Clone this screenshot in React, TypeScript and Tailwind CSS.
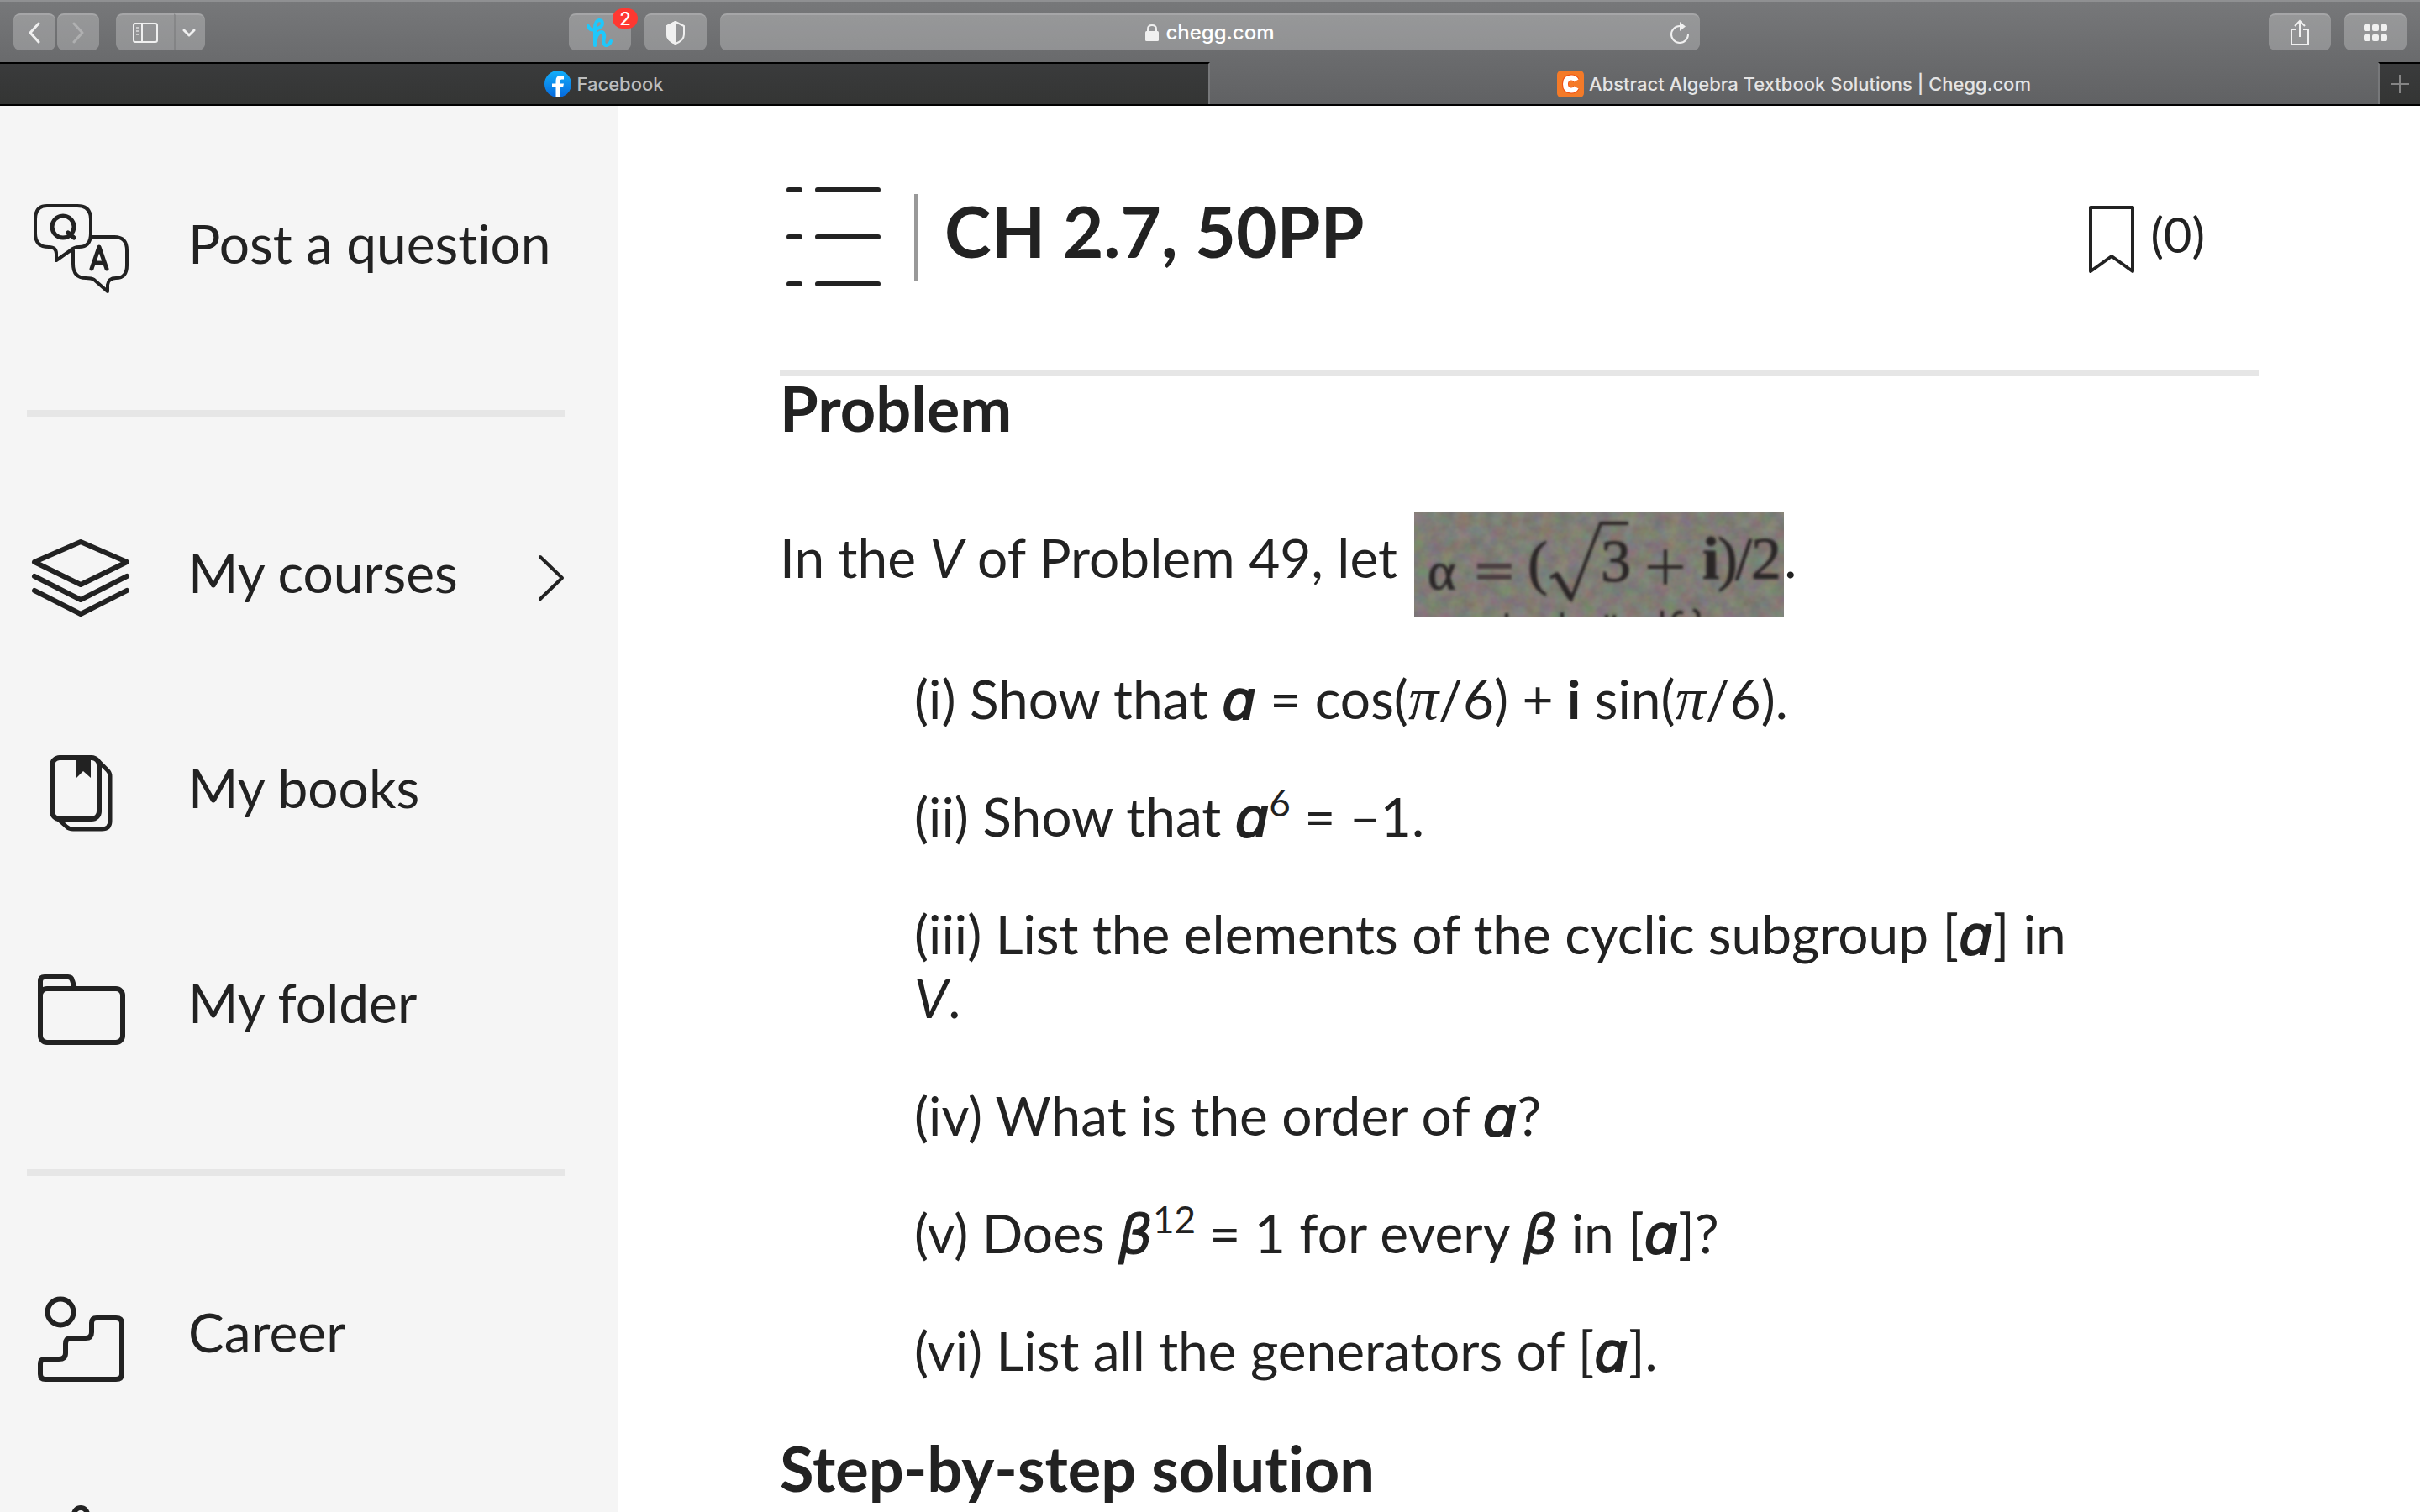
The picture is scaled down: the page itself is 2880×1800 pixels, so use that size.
import type { ReactNode } from "react"

function Svg({ size, children }: { size: string; children: ReactNode }) {
    return (
        <svg
            viewBox="0 0 120 120"
            className={size}
            fill="none"
            stroke="currentColor"
            strokeWidth={6}
            strokeLinecap="round"
            strokeLinejoin="round"
            aria-hidden="true"
        >
            {children}
        </svg>
    )
}

function QuestionIcon() {
    return (
        <Svg size="size-[120px] shrink-0">
            <g strokeWidth={4}>
                <path d="M20 9H56Q72 9 72 25V42Q72 58 58 58Q52 58 48 62L31 74V66Q31 58 22 58Q6 58 6 42V25Q6 9 20 9Z" />
                <path d="M74 46H100Q115 46 115 62V80Q115 95 102 95Q93 95 92 103V111L76 97Q73 95 66 95Q51 95 51 78V62" />
                <g strokeWidth={5}>
                    <ellipse cx="39" cy="34" rx="13" ry="13" />
                    <path d="M45 41L52 47M73 84L82 58L91 84M76 77H88" />
                </g>
            </g>
        </Svg>
    )
}

function CoursesIcon() {
    return (
        <Svg size="size-[120px] shrink-0">
            <path d="M60 17L115 41L60 68L5 41ZM5 58L60 86L115 58M5 75L60 103L115 75" />
        </Svg>
    )
}

function BooksIcon() {
    return (
        <Svg size="size-[120px] shrink-0">
            <rect x="26" y="18" width="56" height="73" rx="9" />
            <path d="M82 23L92 33Q95 36 95 40V93Q95 103 85 103H51Q46 103 43 100L33 91" strokeWidth={5} />
            <path d="M55 18H72V42L63 34L55 42Z" fill="currentColor" stroke="none" />
        </Svg>
    )
}

function FolderIcon() {
    return (
        <Svg size="size-[120px] shrink-0">
            <rect x="12" y="37" width="98" height="64" rx="8" />
            <path d="M12 43V28Q12 23 17 23H45Q49 23 50 27L53 37" />
        </Svg>
    )
}

function CareerIcon() {
    return (
        <Svg size="size-[120px] shrink-0">
            <circle cx="36" cy="30" r="15.5" />
            <path d="M17 86H34Q42 86 42 79V68Q42 61 48 61H66Q73 61 73 54V43Q73 37 79 37H102Q109 37 109 43V104Q109 110 102 110H18Q12 110 12 104V92Q12 86 17 86Z" />
        </Svg>
    )
}

function PersonIcon() {
    return (
        <Svg size="size-[120px] shrink-0">
            <circle cx="60" cy="15" r="8" />
            <path d="M60 23V60M20 60H100V100H20Z" />
        </Svg>
    )
}

function SidebarLink({ icon, label, arrow }: { icon: ReactNode; label: string; arrow?: boolean }) {
    return (
        <a href="#" aria-label={label || "More"} className="flex h-64 shrink-0 items-center gap-[68px] pr-16 pl-9">
            {icon}
            <span className="flex-1 pb-3 text-[64px] leading-[76px] whitespace-nowrap">{label}</span>
            {arrow && (
                <svg viewBox="0 0 32 56" className="h-14 w-8" fill="none" stroke="currentColor" strokeWidth={4} strokeLinecap="round" strokeLinejoin="round" aria-hidden="true">
                    <path d="M3 3L29 28L3 53" />
                </svg>
            )}
        </a>
    )
}

function Divider() {
    return <hr className="my-16 mr-16 ml-8 h-2 shrink-0 border-0 bg-[#e6e6e6]" />
}

function Sidebar() {
    return (
        <aside className="w-[736px] shrink-0 overflow-hidden bg-[#f5f5f5]">
            <nav className="flex flex-col pt-[42px]">
                <SidebarLink icon={<QuestionIcon />} label="Post a question" />
                <Divider />
                <SidebarLink icon={<CoursesIcon />} label="My courses" arrow />
                <SidebarLink icon={<BooksIcon />} label="My books" />
                <SidebarLink icon={<FolderIcon />} label="My folder" />
                <Divider />
                <SidebarLink icon={<CareerIcon />} label="Career" />
                <SidebarLink icon={<PersonIcon />} label="" />
            </nav>
        </aside>
    )
}

const chromeButton = "flex h-11 items-center justify-center border-t-2 border-white/15 bg-white/25 text-[#f0f0f0]"

function Toolbar() {
    return (
        <div className="flex h-[74px] items-center border-t-2 border-[#8f9092] px-4">
            <div className="flex flex-1 items-center">
                <button aria-label="Back" className={`${chromeButton} w-[50px] rounded-lg`}>
                    <svg viewBox="0 0 16 26" className="h-[26px] w-4" fill="none" stroke="currentColor" strokeWidth={3} strokeLinecap="round" strokeLinejoin="round">
                        <path d="M13 2L3 13L13 24" />
                    </svg>
                </button>
                <button aria-label="Forward" className={`${chromeButton} ml-0.5 w-[50px] rounded-lg`}>
                    <svg viewBox="0 0 16 26" className="h-[26px] w-4 opacity-30" fill="none" stroke="currentColor" strokeWidth={3} strokeLinecap="round" strokeLinejoin="round">
                        <path d="M3 2L13 13L3 24" />
                    </svg>
                </button>
                <button aria-label="Sidebar" className={`${chromeButton} ml-5 w-[69px] rounded-l-lg`}>
                    <svg viewBox="0 0 32 26" className="h-[26px] w-8" fill="none" stroke="currentColor" strokeWidth={2}>
                        <rect x="2" y="2" width="28" height="22" rx="2" />
                        <path d="M12 2V24" />
                        <path d="M5 7H9M5 11H9M5 15H9" opacity="0.6" />
                    </svg>
                </button>
                <button aria-label="Sidebar options" className={`${chromeButton} w-[37px] rounded-r-lg border-l-2 border-l-black/10 pr-1`}>
                    <svg viewBox="0 0 16 10" className="h-2.5 w-4" fill="none" stroke="currentColor" strokeWidth={3} strokeLinecap="round" strokeLinejoin="round">
                        <path d="M2 2L8 8L14 2" />
                    </svg>
                </button>
                <div className="flex-1" />
                <button aria-label="Honey" className={`${chromeButton} relative w-[74px] rounded-lg`}>
                    <svg viewBox="0 0 32 34" className="h-[34px] w-8" fill="none" stroke="#1fc8fb" strokeWidth={4} strokeLinecap="round" strokeLinejoin="round" aria-hidden="true">
                        <path d="M2 9Q4 15 11 13Q19 10 19 6Q19 2 15 2Q10 3 10 11V32Q11 17 18 16Q22 17 21 23Q19 32 24 32Q28 31 29 27" />
                    </svg>
                    <span className="absolute -top-2 -right-2 flex h-6 w-[30px] items-center justify-center rounded-full bg-[#ff3831] text-[22px] font-medium text-white">2</span>
                </button>
                <button aria-label="Privacy" className={`${chromeButton} mx-4 w-[74px] rounded-lg`}>
                    <svg viewBox="0 0 24 28" className="h-7 w-6" fill="none" stroke="currentColor" strokeWidth={2} strokeLinejoin="round">
                        <path d="M12 1L22 6V16Q22 23 12 27Q2 23 2 16V6Z" />
                        <path d="M12 1V27Q2 23 2 16V6Z" fill="currentColor" />
                    </svg>
                </button>
            </div>
            <div className="flex h-11 w-[1166px] items-center rounded-lg border-t-2 border-white/15 bg-white/25 px-3">
                <span className="w-6" />
                <label className="flex flex-1 items-center justify-center gap-2">
                    <svg viewBox="0 0 16 20" className="h-5 w-4 text-[#f0f0f0]" aria-hidden="true">
                        <rect x="0" y="8" width="16" height="12" rx="1.5" fill="currentColor" />
                        <path d="M3 9V5.5Q3 1 8 1Q13 1 13 5.5V9" fill="none" stroke="currentColor" strokeWidth={2} />
                    </svg>
                    <input aria-label="Address" defaultValue="chegg.com" className="field-sizing-content bg-transparent text-2xl leading-8 font-medium text-white outline-none" />
                </label>
                <button aria-label="Reload" className="text-[#f0f0f0]">
                    <svg viewBox="0 0 24 28" className="h-7 w-6" fill="none" stroke="currentColor" strokeWidth={2}>
                        <path d="M12 6A10 10 0 1 0 22 16" />
                        <path d="M12 1L19 6.5L12 12Z" fill="currentColor" stroke="none" />
                    </svg>
                </button>
            </div>
            <div className="flex flex-1 justify-end gap-4">
                <button aria-label="Share" className={`${chromeButton} w-[74px] rounded-lg`}>
                    <svg viewBox="0 0 24 32" className="h-8 w-6" fill="none" stroke="currentColor" strokeWidth={2}>
                        <path d="M8 12H2V30H22V12H16M12 21V2M6 8L12 2L18 8" />
                    </svg>
                </button>
                <button aria-label="Tab overview" className={`${chromeButton} w-[74px] rounded-lg`}>
                    <svg viewBox="0 0 28 20" className="h-5 w-7" fill="currentColor">
                        <rect x="0" y="0" width="8" height="8" rx="2" />
                        <rect x="10" y="0" width="8" height="8" rx="2" />
                        <rect x="20" y="0" width="8" height="8" rx="2" />
                        <rect x="0" y="12" width="8" height="8" rx="2" />
                        <rect x="10" y="12" width="8" height="8" rx="2" />
                        <rect x="20" y="12" width="8" height="8" rx="2" />
                    </svg>
                </button>
            </div>
        </div>
    )
}

function TabBar() {
    return (
        <div className="flex h-[52px] border-b-2 border-black text-[22px] font-medium">
            <button className="flex w-1/2 items-center justify-center gap-1.5 border-t-2 border-r-2 border-t-black border-r-[#77787a] bg-linear-to-b from-[#3a3b3c] to-[#343534] text-[#bdbdbd]">
                <svg viewBox="0 0 32 32" className="size-8" aria-hidden="true">
                    <defs>
                        <linearGradient id="fb" x1="0" y1="0" x2="0" y2="1">
                            <stop offset="0" stopColor="#12b0fb" />
                            <stop offset="1" stopColor="#0568dd" />
                        </linearGradient>
                    </defs>
                    <circle cx="16" cy="16" r="16" fill="url(#fb)" />
                    <path d="M13.5 32V20H9V15.5H13.5V12Q13.5 6 19 6H23V10.5H20.5Q18.5 10.5 18.5 12.5V15.5H23L22 20H18.5V32Z" fill="#fff" />
                </svg>
                Facebook
            </button>
            <button className="flex flex-1 items-center justify-center gap-1.5 pt-0.5 text-[#e4e4e4]">
                <svg viewBox="0 0 32 32" className="size-8" aria-hidden="true">
                    <rect width="32" height="32" rx="5" fill="#f47a28" />
                    <path d="M23 12Q21 8.500 17 8.500Q10 8.500 10 16Q10 23.500 17 23.500Q21 23.500 23 20" fill="none" stroke="#f04e12" strokeWidth={8} />
                    <path d="M23 12Q21 8.500 17 8.500Q10 8.500 10 16Q10 23.500 17 23.500Q21 23.500 23 20" fill="none" stroke="#fff" strokeWidth={6} />
                </svg>
                Abstract Algebra Textbook Solutions | Chegg.com
            </button>
            <button aria-label="New tab" className="flex w-[50px] items-center justify-center border-t-2 border-l-2 border-t-black border-l-[#77787a] bg-linear-to-b from-[#3a3b3c] to-[#343534] text-[#858585]">
                <svg viewBox="0 0 22 22" className="size-[22px]" fill="none" stroke="currentColor" strokeWidth={2}>
                    <path d="M11 0V22M0 11H22" />
                </svg>
            </button>
        </div>
    )
}

function FormulaPhoto() {
    return (
        <svg viewBox="0 0 440 124" className="ml-1 inline-block h-[124px] w-[440px] align-middle" role="img" aria-label="α = (√3 + i)/2">
            <defs>
                <filter id="grain" x="0" y="0" width="100%" height="100%" colorInterpolationFilters="sRGB">
                    <feTurbulence type="fractalNoise" baseFrequency="0.06" numOctaves="3" seed="4" />
                    <feColorMatrix values="0.16 0 0 0 0.42  0 0.16 0 0 0.41  0 0 0.16 0 0.38  0 0 0 0 1" />
                </filter>
                <filter id="soft">
                    <feGaussianBlur stdDeviation="1.5" />
                </filter>
            </defs>
            <rect width="440" height="124" fill="#807d77" />
            <rect width="440" height="124" filter="url(#grain)" />
            <g filter="url(#soft)" fill="#2c2628" stroke="#2c2628" fontFamily="Liberation Serif, serif" fontSize="72">
                <text x="16" y="91" fontSize="64" strokeWidth="1">α</text>
                <path d="M75 64H116M75 77H116" stroke="#4b3e3f" strokeWidth="6" />
                <text x="135" y="84" strokeWidth="1">(</text>
                <path d="M162 78L170 73L187 103L222 13H255" fill="none" strokeWidth="4" />
                <path d="M170 75L187 103" strokeWidth="7" />
                <text x="222" y="82" strokeWidth="1">3</text>
                <path d="M278 65H320M299 44V86" strokeWidth="4" />
                <text x="343" y="79" fontWeight="bold">i</text>
                <text x="361" y="79" strokeWidth="1">)</text>
                <text x="382" y="79" strokeWidth="1">/</text>
                <text x="401" y="79" strokeWidth="1">2</text>
                <path d="M110 126V120M176 126V119M229 126V122M238 126V122M295 126V117M308 126Q312 116 320 120M332 116Q340 118 338 126" fill="none" strokeWidth="4" />
            </g>
        </svg>
    )
}

function Alpha() {
    return <em className="font-['DejaVu_Sans'] leading-none [-webkit-text-stroke:2px]">ɑ</em>
}

function Beta() {
    return <em className="font-['DejaVu_Sans'] leading-none [-webkit-text-stroke:1px]">β</em>
}

function Pi() {
    return <em className="font-['Liberation_Serif'] text-[72px] leading-none">π</em>
}

function Sup({ children }: { children: ReactNode }) {
    return <sup className="-top-6 align-baseline text-[44px] leading-none">{children}</sup>
}

function Solution() {
    return (
        <main className="min-w-0 flex-1 overflow-hidden px-48">
            <header className="flex h-[322px] items-center border-b-8 border-[#e6e6e6]">
                <button aria-label="Table of contents" className="ml-2">
                    <svg viewBox="0 0 112 120" className="h-[120px] w-28" fill="none" stroke="currentColor" strokeWidth={6} strokeLinecap="round">
                        <path d="M3 3H16M37 3H109M3 59H16M37 59H109M3 115H16M37 115H109" />
                    </svg>
                </button>
                <div className="mr-8 ml-10 h-[104px] w-1 bg-[#999]" />
                <h1 className="pb-4 text-[84px] leading-[104px] font-bold">CH 2.7, 50PP</h1>
                <button aria-label="Bookmark" className="mr-16 ml-auto flex items-center gap-4 pt-1">
                    <svg viewBox="0 0 60 84" className="h-[84px] w-[60px]" fill="none" stroke="currentColor" strokeWidth={4} strokeLinejoin="round">
                        <path d="M5 4H55V80L30 62L5 80Z" />
                    </svg>
                    <span className="pb-3 text-[58px] leading-[64px]">(0)</span>
                </button>
            </header>
            <h2 className="text-[74px] leading-[76px] font-bold">Problem</h2>
            <div className="text-[64px] leading-[76px]">
                <p className="mt-[86px]">
                    In the <em>V</em> of Problem 49, let <FormulaPhoto />.
                </p>
                <div className="mr-44 ml-40 mt-[60px] flex flex-col gap-16">
                    <p>(i) Show that <Alpha /> = cos(<Pi />/6) + <b>i</b> sin(<Pi />/6).</p>
                    <p>(ii) Show that <Alpha /><Sup>6</Sup> = –1.</p>
                    <p>(iii) List the elements of the cyclic subgroup [<Alpha />] in <em>V</em>.</p>
                    <p>(iv) What is the order of <Alpha />?</p>
                    <p>(v) Does <Beta /><Sup>12</Sup> = 1 for every <Beta /> in [<Alpha />]?</p>
                    <p>(vi) List all the generators of [<Alpha />].</p>
                </div>
            </div>
            <h2 className="mt-16 text-[74px] leading-[76px] font-bold">Step-by-step solution</h2>
        </main>
    )
}

export default function App() {
    return (
        <div className="flex h-screen flex-col overflow-hidden bg-white text-[#222]">
            <div className="shrink-0 bg-linear-to-b from-[#77787a] to-[#606163] font-['Inter',sans-serif]">
                <Toolbar />
                <TabBar />
            </div>
            <div className="flex min-h-0 flex-1 font-['Lato',sans-serif] [font-variant-ligatures:none]">
                <Sidebar />
                <Solution />
            </div>
        </div>
    )
}
